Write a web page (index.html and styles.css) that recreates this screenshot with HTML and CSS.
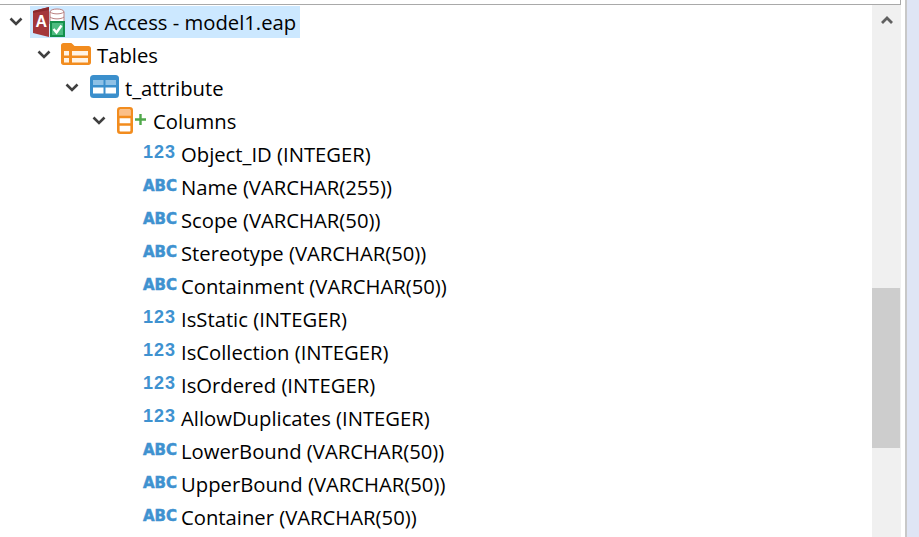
FILE: index.html
```html
<!DOCTYPE html>
<html lang="en">
<head>
    <meta charset="UTF-8">
    <title>MS Access - model1.eap</title>
    <link rel="stylesheet" href="styles.css">
</head>
<body>
    <svg class="defs" width="0" height="0">
        <symbol id="chevron" viewBox="0 0 14 9">
            <path d="M1.500 1.500 7 7l5.500-5.500" fill="none" stroke="#404040" stroke-width="2.600"/>
        </symbol>
    </svg>
    <div class="window">
        <div class="tree-pane">
            <div class="top-edge"></div>
            <div class="tree-body">
                <div class="tree">
                    <div class="row depth-0">
                        <svg class="chevron"><use href="#chevron"/></svg>
                        <div class="selected">
                            <svg class="icon-db" viewBox="0 0 32 30" width="32" height="30">
                                <path d="M17 5c0-4 14-4 14 0v12H17z" fill="#fff" stroke="#b97f7f"/>
                                <path d="M17 5c3 2.500 11 2.500 14 0M17 10c3 2.500 11 2.500 14 0" fill="none" stroke="#b97f7f"/>
                                <path d="M0 4 16 0v30L0 26z" fill="#a4373a"/>
                                <path d="M0 4 16 0v3L0 6z" fill="#8a2a2d"/>
                                <text x="2.500" y="20" class="access-letter">A</text>
                                <rect x="17" y="14" width="15" height="16" fill="#14904c"/>
                                <rect x="19" y="16" width="11" height="12" fill="#4dbb80"/>
                                <path d="M20.500 22l3 3.500 5-7" fill="none" stroke="#fff" stroke-width="2.400"/>
                            </svg>
                            <span class="label">MS Access - model1.eap</span>
                        </div>
                    </div>
                    <div class="row depth-1">
                        <svg class="chevron"><use href="#chevron"/></svg>
                        <svg class="icon-folder" viewBox="0 0 30 22" width="30" height="22">
                            <path d="M0 2.500C0 1 1 0 2.500 0h7c1 0 1.500.5 2 1l2 2h14c1.500 0 2.500 1 2.500 2.500v14c0 1.500-1 2.500-2.500 2.500h-25C1 22 0 21 0 19.500z" fill="#f28c1e"/>
                            <path d="M3 8h5v4.500H3zM11 8h16v4.500H11zM3 15h5v4.500H3zM11 15h16v4.500H11z" fill="#fff3e4"/>
                        </svg>
                        <span class="label">Tables</span>
                    </div>
                    <div class="row depth-2">
                        <svg class="chevron"><use href="#chevron"/></svg>
                        <svg class="icon-table" viewBox="0 0 29 23" width="29" height="23">
                            <rect width="29" height="23" rx="3.500" fill="#3b8fcc"/>
                            <path d="M3 5h10.500v5H3zM15.500 5H26v5H15.500z" fill="#8fc1e6"/>
                            <path d="M3 12.500h10.500v6H3zM15.500 12.500H26v6H15.500z" fill="#fff"/>
                        </svg>
                        <span class="label">t_attribute</span>
                    </div>
                    <div class="row depth-3">
                        <svg class="chevron"><use href="#chevron"/></svg>
                        <svg class="icon-columns" viewBox="0 0 30 27" width="30" height="27">
                            <rect x="1.300" y="1.300" width="13.400" height="24.400" rx="2" fill="#fff" stroke="#f28c1e" stroke-width="2.600"/>
                            <rect x="2.600" y="2.600" width="10.800" height="6.400" fill="#fbbf88"/>
                            <path d="M2 10h12M2 17.500h12" stroke="#f28c1e" stroke-width="2.400"/>
                            <path d="M18 12.500h11M23.500 7v11" stroke="#4fa84a" stroke-width="2.400"/>
                        </svg>
                        <span class="label">Columns</span>
                    </div>
                    <div class="row column"><span class="type type-num">123</span><span class="label">Object_ID (INTEGER)</span></div>
                    <div class="row column"><span class="type type-text">ABC</span><span class="label">Name (VARCHAR(255))</span></div>
                    <div class="row column"><span class="type type-text">ABC</span><span class="label">Scope (VARCHAR(50))</span></div>
                    <div class="row column"><span class="type type-text">ABC</span><span class="label">Stereotype (VARCHAR(50))</span></div>
                    <div class="row column"><span class="type type-text">ABC</span><span class="label">Containment (VARCHAR(50))</span></div>
                    <div class="row column"><span class="type type-num">123</span><span class="label">IsStatic (INTEGER)</span></div>
                    <div class="row column"><span class="type type-num">123</span><span class="label">IsCollection (INTEGER)</span></div>
                    <div class="row column"><span class="type type-num">123</span><span class="label">IsOrdered (INTEGER)</span></div>
                    <div class="row column"><span class="type type-num">123</span><span class="label">AllowDuplicates (INTEGER)</span></div>
                    <div class="row column"><span class="type type-text">ABC</span><span class="label">LowerBound (VARCHAR(50))</span></div>
                    <div class="row column"><span class="type type-text">ABC</span><span class="label">UpperBound (VARCHAR(50))</span></div>
                    <div class="row column"><span class="type type-text">ABC</span><span class="label">Container (VARCHAR(50))</span></div>
                </div>
                <div class="scrollbar">
                    <svg class="scroll-up" viewBox="0 0 12 9" width="12" height="9">
                        <path d="M1 8 6 3l5 5" fill="none" stroke="#606060" stroke-width="2.800"/>
                    </svg>
                    <div class="scroll-thumb"></div>
                </div>
            </div>
        </div>
        <div class="side-panel"></div>
    </div>
</body>
</html>
```

FILE: styles.css
```css
html, body {
    margin: 0;
    height: 100%;
    overflow: hidden;
    background: white;
}
.defs {
    display: block;
    height: 0;
}
.window {
    display: flex;
    height: 537px;
    font-family: "Open Sans", sans-serif;
    font-size: 20.25px;
    color: black;
}
.tree-pane {
    display: flex;
    flex-direction: column;
    width: 901px;
    overflow: hidden;
}
.top-edge {
    flex: none;
    height: 4px;
    border-bottom: 1px solid #a9a9a9;
    border-right: 1px solid #a9a9a9;
}
.tree-body {
    display: flex;
    flex: 1;
    min-height: 0;
}
.tree {
    flex: 1;
    padding-top: 1px;
    overflow: hidden;
}
.row {
    display: flex;
    align-items: center;
    height: 33px;
    white-space: nowrap;
}
.label {
    margin-bottom: 2px;
}
.selected .label {
    margin-bottom: 0;
}
.depth-0 { padding-left: 9px; }
.depth-1 { padding-left: 37px; }
.depth-2 { padding-left: 65px; }
.depth-3 { padding-left: 92px; }
.column { padding-left: 143px; }
.chevron {
    width: 14px;
    height: 9px;
    flex: none;
    margin-bottom: 3px;
}
.selected {
    display: flex;
    align-items: center;
    height: 32px;
    width: 270px;
    margin-left: 7px;
    margin-bottom: 1px;
    background: #cce8ff;
}
.icon-db {
    margin-left: 3px;
    margin-right: 5px;
}
.access-letter {
    font-family: "Liberation Sans", sans-serif;
    font-size: 16px;
    font-weight: bold;
    fill: white;
}
.icon-folder {
    margin-left: 10px;
    margin-right: 6px;
    margin-bottom: 3px;
}
.icon-table {
    margin-left: 11px;
    margin-right: 6px;
    margin-bottom: 4px;
}
.icon-columns {
    margin-left: 11px;
    margin-right: 6px;
    margin-bottom: 3px;
}
.type {
    width: 38px;
    color: #3f92d0;
    position: relative;
}
.type-num {
    font-family: "Liberation Sans", sans-serif;
    font-size: 18px;
    font-weight: bold;
    letter-spacing: 1px;
    top: -2px;
}
.type-text {
    font-family: "DejaVu Sans", sans-serif;
    font-size: 15px;
    font-weight: bold;
    -webkit-text-stroke: 0.5px #3f92d0;
    top: -2px;
}
.scrollbar {
    position: relative;
    flex: none;
    width: 29px;
    background: #f0f0f0;
}
.scroll-up {
    position: absolute;
    top: 10px;
    left: 9px;
}
.scroll-thumb {
    position: absolute;
    top: 283px;
    left: 0;
    width: 28px;
    height: 160px;
    background: #cdcdcd;
}
.side-panel {
    flex: 1;
    margin-left: 4px;
    border-left: 2px solid #c8c8c8;
    background: #dfe5f5;
}
```
